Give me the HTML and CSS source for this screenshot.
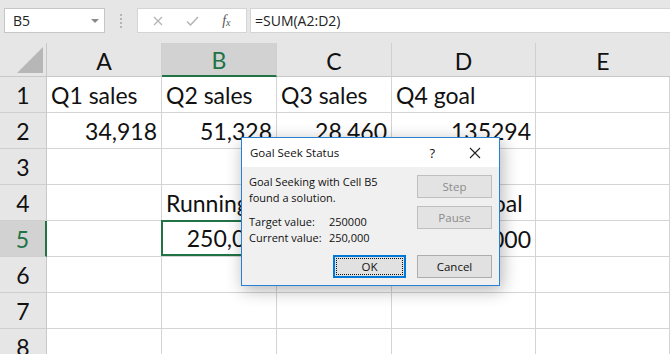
FILE: index.html
```html
<!DOCTYPE html>
<html lang="en">
<head>
  <meta charset="UTF-8">
  <title>Goal Seek</title>
  <link rel="stylesheet" href="styles.css">
</head>
<body>

  <div class="toolbar">
    <div class="name-box">
      <span>B5</span>
      <svg class="caret" width="8" height="4" viewBox="0 0 8 4"><path d="M0 0h8L4 4z" fill="#8a8a8a"/></svg>
    </div>
    <div class="grip">
      <svg width="3" height="14" viewBox="0 0 3 14"><g fill="#b4b4b4"><rect x="0" y="0" width="2" height="2"/><rect x="0" y="4" width="2" height="2"/><rect x="0" y="8" width="2" height="2"/><rect x="0" y="12" width="2" height="2"/></g></svg>
    </div>
    <div class="formula-buttons">
      <svg width="10" height="10" viewBox="0 0 10 10"><path d="M1 1l8 8M9 1l-8 8" stroke="#b4b4b4" stroke-width="1.3"/></svg>
      <svg width="13" height="10" viewBox="0 0 13 10"><path d="M1 5.5l3.5 3.5L12 1" stroke="#b4b4b4" stroke-width="1.5" fill="none"/></svg>
      <span class="fx">f<sub>x</sub></span>
    </div>
    <div class="formula">=SUM(A2:D2)</div>
  </div>

  <div class="sheet">
    <div class="corner"><div class="tri"></div></div>
    <div class="col-head">A</div>
    <div class="col-head active">B</div>
    <div class="col-head">C</div>
    <div class="col-head">D</div>
    <div class="col-head last">E</div>

    <div class="row-head">1</div>
    <div class="cell">Q1 sales</div>
    <div class="cell">Q2 sales</div>
    <div class="cell">Q3 sales</div>
    <div class="cell">Q4 goal</div>
    <div class="cell"></div>

    <div class="row-head">2</div>
    <div class="cell num">34,918</div>
    <div class="cell num">51,328</div>
    <div class="cell num">28,460</div>
    <div class="cell num">135294</div>
    <div class="cell"></div>

    <div class="row-head">3</div>
    <div class="cell"></div>
    <div class="cell"></div>
    <div class="cell"></div>
    <div class="cell"></div>
    <div class="cell"></div>

    <div class="row-head">4</div>
    <div class="cell"></div>
    <div class="cell overflow">Running total</div>
    <div class="cell"></div>
    <div class="cell">Quarter goal</div>
    <div class="cell"></div>

    <div class="row-head active">5</div>
    <div class="cell"></div>
    <div class="cell num selected">250,000</div>
    <div class="cell"></div>
    <div class="cell num">250,000</div>
    <div class="cell"></div>

    <div class="row-head">6</div>
    <div class="cell"></div>
    <div class="cell"></div>
    <div class="cell"></div>
    <div class="cell"></div>
    <div class="cell"></div>

    <div class="row-head">7</div>
    <div class="cell"></div>
    <div class="cell"></div>
    <div class="cell"></div>
    <div class="cell"></div>
    <div class="cell"></div>

    <div class="row-head">8</div>
    <div class="cell"></div>
    <div class="cell"></div>
    <div class="cell"></div>
    <div class="cell"></div>
    <div class="cell"></div>
  </div>

  <div class="dialog">
    <div class="dialog-title">
      <span>Goal Seek Status</span>
      <div class="title-icons">
        <span class="help">?</span>
        <svg width="12" height="12" viewBox="0 0 12 12"><path d="M1 1l10 10M11 1L1 11" stroke="#222" stroke-width="1.1"/></svg>
      </div>
    </div>
    <div class="dialog-body">
      <div class="dialog-main">
        <div class="msg">
          <p>Goal Seeking with Cell B5<br>found a solution.</p>
          <table class="values">
            <tr><td>Target value:</td><td>250000</td></tr>
            <tr><td>Current value:</td><td>250,000</td></tr>
          </table>
        </div>
        <div class="side-buttons">
          <button class="btn" disabled>Step</button>
          <button class="btn" disabled>Pause</button>
        </div>
      </div>
      <div class="dialog-footer">
        <button class="btn default"><span>OK</span></button>
        <button class="btn">Cancel</button>
      </div>
    </div>
  </div>

</body>
</html>
```

FILE: styles.css
```css
body {
  margin: 0;
  width: 670px;
  height: 354px;
  overflow: hidden;
  background: #fff;
  font-family: Lato, "Liberation Sans", sans-serif;
  position: relative;
}

.toolbar {
  height: 43px;
  background: #e6e6e6;
  display: flex;
  align-items: flex-start;
  padding-top: 8px;
  box-sizing: border-box;
}

.name-box {
  margin-left: 4px;
  width: 101px;
  height: 25px;
  box-sizing: border-box;
  background: #fff;
  border: 1px solid #c6c6c6;
  display: flex;
  align-items: center;
  justify-content: space-between;
  padding: 0 5px 0 8px;
  font-family: "Open Sans", sans-serif;
  font-size: 14px;
  color: #222;
}

.grip {
  width: 32px;
  display: flex;
  justify-content: center;
  padding-top: 6px;
}

.formula-buttons {
  width: 110px;
  height: 25px;
  box-sizing: border-box;
  background: #fff;
  border: 1px solid #d4d4d4;
  display: flex;
  align-items: center;
  justify-content: space-around;
  padding: 0 4px;
}

.fx {
  font-family: "Liberation Serif", serif;
  font-style: italic;
  font-size: 14px;
  color: #555;
}

.fx sub {
  font-size: 10px;
  vertical-align: -1px;
}

.formula {
  flex: 1;
  margin-left: 3px;
  height: 25px;
  box-sizing: border-box;
  background: #fff;
  border: 1px solid #d4d4d4;
  border-right: none;
  padding: 2px 0 0 4px;
  font-family: "Open Sans", sans-serif;
  font-size: 14px;
  color: #222;
}

.sheet {
  display: grid;
  grid-template-columns: 47px 115px 115px 115px 144px 1fr;
  grid-template-rows: 34px repeat(8, 36px);
  font-size: 23px;
  color: #111;
}

.corner {
  background: #e6e6e6;
  border-right: 1px solid #c8c8c8;
  border-bottom: 1px solid #c8c8c8;
  position: relative;
}

.tri {
  position: absolute;
  right: 3px;
  bottom: 3px;
  width: 0;
  height: 0;
  border-left: 26px solid transparent;
  border-bottom: 26px solid #b7b7b7;
}

.col-head {
  background: #e6e6e6;
  border-right: 1px solid #cfcfcf;
  border-bottom: 1px solid #c8c8c8;
  display: flex;
  align-items: center;
  justify-content: center;
  padding-top: 2px;
}

.col-head.last {
  border-right: none;
}

.col-head.active {
  background: #d2d2d2;
  color: #217346;
  border-bottom: 2px solid #217346;
}

.row-head {
  background: #e6e6e6;
  border-right: 1px solid #c8c8c8;
  border-bottom: 1px solid #cfcfcf;
  display: flex;
  align-items: center;
  justify-content: center;
}

.row-head.active {
  background: #d2d2d2;
  color: #217346;
  border-right: 2px solid #217346;
}

.cell {
  border-right: 1px solid #d4d4d4;
  border-bottom: 1px solid #d4d4d4;
  display: flex;
  align-items: center;
  padding: 0 4px;
  white-space: nowrap;
  overflow: hidden;
}

.cell.overflow {
  overflow: visible;
}

.cell.num {
  justify-content: flex-end;
}

.cell.selected {
  box-shadow: inset 0 0 0 2px #217346;
  margin: -1px 0 0 -1px;
}

/* dialog */

.dialog {
  position: absolute;
  left: 241px;
  top: 137px;
  width: 259px;
  height: 149px;
  box-sizing: border-box;
  border: 1px solid #2680d6;
  background: #f0f0f0;
  box-shadow: 2px 4px 16px rgba(0, 0, 0, 0.3);
  font-family: "Open Sans", sans-serif;
  font-size: 11px;
  color: #111;
}

.dialog-title {
  height: 29px;
  background: #fff;
  display: flex;
  align-items: center;
  justify-content: space-between;
  padding: 0 18px 0 8px;
  font-size: 11.5px;
}

.title-icons {
  display: flex;
  align-items: center;
  gap: 34px;
}

.help {
  font-size: 13px;
}

.dialog-body {
  padding: 7px 7px 0 7px;
}

.dialog-main {
  display: flex;
  justify-content: space-between;
}

.msg p {
  margin: 0 0 8px;
  line-height: 16px;
}

.values {
  border-collapse: collapse;
}

.values td {
  padding: 0;
  line-height: 16px;
}

.values td:first-child {
  width: 80px;
}

.side-buttons {
  display: flex;
  flex-direction: column;
  gap: 8px;
  padding-top: 1px;
}

.btn {
  width: 75px;
  height: 23px;
  box-sizing: border-box;
  background: #e1e1e1;
  border: 1px solid #adadad;
  font-family: "Open Sans", sans-serif;
  font-size: 11.5px;
  color: #111;
  padding: 0;
}

.btn:disabled {
  color: #8c8c8c;
  border-color: #bfbfbf;
  background: #e3e3e3;
}

.dialog-footer {
  display: flex;
  justify-content: flex-end;
  gap: 11px;
  margin-top: 9px;
}

.btn.default {
  width: 73px;
  border: 2px solid #0078d7;
  padding: 1px;
}

.btn.default span {
  display: block;
  height: 100%;
  border: 1px dotted #111;
  box-sizing: border-box;
  line-height: 15px;
}
```
